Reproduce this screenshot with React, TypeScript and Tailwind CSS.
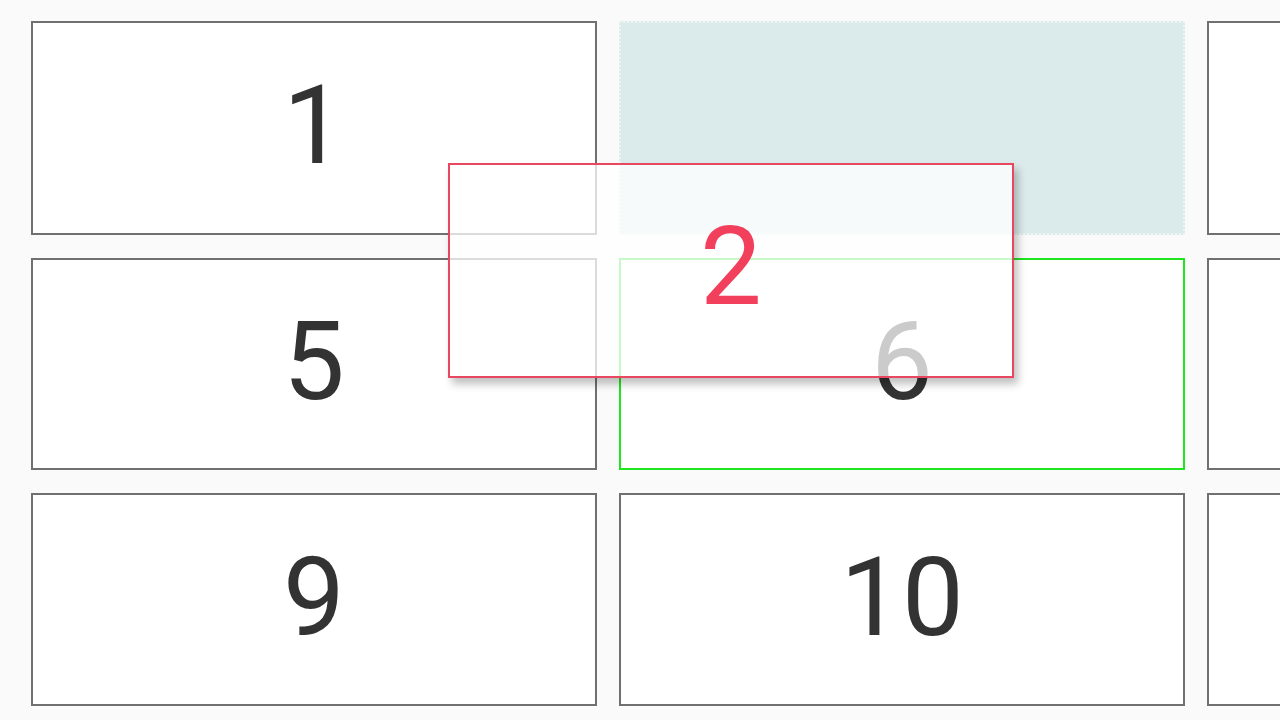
import React from "react";

const font = { fontFamily: "Roboto, 'Liberation Sans', sans-serif" };

function Cell({ n, variant }: { n?: number; variant?: "placeholder" | "green" }) {
  if (variant === "placeholder") {
    return <div className="box-border border-2 border-dotted border-[#eef5f5] bg-[#dbeaeb]" />;
  }
  return (
    <div
      className={
        "box-border flex items-center justify-center bg-white text-[110px] leading-none text-[#333333] " +
        (variant === "green" ? "border-2 border-[#1ee51e]" : "border-2 border-[#707070]")
      }
    >
      {n !== undefined ? <span className="relative top-[-2px]">{n}</span> : null}
    </div>
  );
}

export default function App() {
  return (
    <div className="relative h-[720px] w-[1280px] overflow-hidden bg-[#fafafa]" style={font}>
      <div className="grid w-[1800px] grid-cols-[566px_566px_566px] grid-rows-[214px_212px_213px] gap-x-[22px] gap-y-[23px] pl-[31px] pt-[21px]">
        <Cell n={1} />
        <Cell variant="placeholder" />
        <Cell />
        <Cell n={5} />
        <Cell n={6} variant="green" />
        <Cell />
        <Cell n={9} />
        <Cell n={10} />
        <Cell />
      </div>
      <div className="absolute left-[448px] top-[163px] box-border flex h-[215px] w-[566px] items-center justify-center border-2 border-[#e8475f] bg-white/75 text-[110px] leading-none text-[#f23f5b] shadow-[4px_6px_8px_rgba(0,0,0,0.25)]">
        <span className="relative top-[-4px]">2</span>
      </div>
    </div>
  );
}
